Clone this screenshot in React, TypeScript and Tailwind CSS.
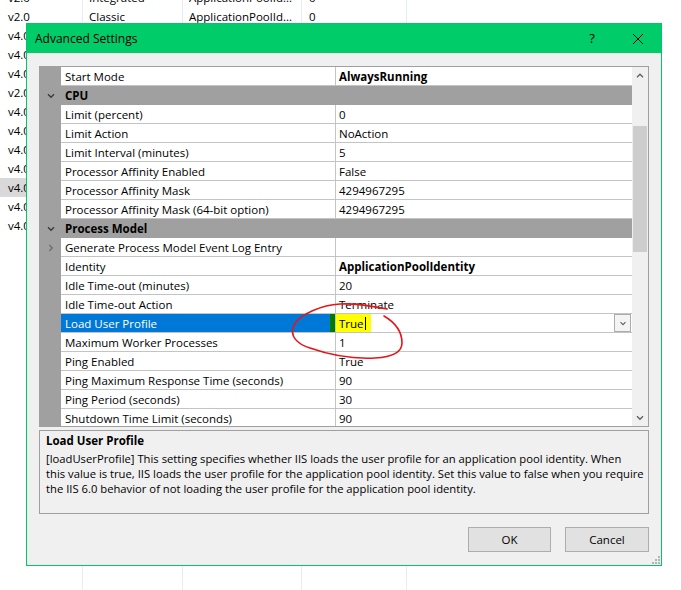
import React from 'react'

type Prop = {
  name?: string
  value?: string
  bold?: boolean
  category?: string
  expand?: boolean
  selected?: boolean
}

const props: Prop[] = [
  { name: 'Start Mode', value: 'AlwaysRunning', bold: true },
  { category: 'CPU' },
  { name: 'Limit (percent)', value: '0' },
  { name: 'Limit Action', value: 'NoAction' },
  { name: 'Limit Interval (minutes)', value: '5' },
  { name: 'Processor Affinity Enabled', value: 'False' },
  { name: 'Processor Affinity Mask', value: '4294967295' },
  { name: 'Processor Affinity Mask (64-bit option)', value: '4294967295' },
  { category: 'Process Model' },
  { name: 'Generate Process Model Event Log Entry', value: '', expand: true },
  { name: 'Identity', value: 'ApplicationPoolIdentity', bold: true },
  { name: 'Idle Time-out (minutes)', value: '20' },
  { name: 'Idle Time-out Action', value: 'Terminate' },
  { name: 'Load User Profile', value: 'True', selected: true },
  { name: 'Maximum Worker Processes', value: '1' },
  { name: 'Ping Enabled', value: 'True' },
  { name: 'Ping Maximum Response Time (seconds)', value: '90' },
  { name: 'Ping Period (seconds)', value: '30' },
  { name: 'Shutdown Time Limit (seconds)', value: '90' },
]

// only the first two rows of the list view peek out above the dialog
const versions = ['v2.0', 'v2.0', 'v4.0', 'v4.0', 'v4.0', 'v2.0', 'v4.0', 'v4.0', 'v4.0', 'v4.0', 'v4.0', 'v4.0', 'v4.0']

const columns = [
  { width: 'w-[83px]', pad: 'pl-[8px]', cells: versions },
  { width: 'w-[100px]', pad: 'pl-[6px]', cells: ['Integrated', 'Classic'] },
  { width: 'w-[119px]', pad: 'pl-[6px]', cells: ['ApplicationPoolId...', 'ApplicationPoolId...'] },
  { width: 'w-[105px]', pad: 'pl-[7px]', cells: ['0', '0'] },
]

function Chevron({ dir, className }: { dir: 'up' | 'down' | 'right'; className?: string }) {
  const d = dir === 'up' ? 'M1 5 L4.5 1.5 L8 5' : dir === 'down' ? 'M1 1.5 L4.5 5 L8 1.5' : 'M1.5 1 L5 4.5 L1.5 8'
  const box = dir === 'right' ? '0 0 7 9' : '0 0 9 7'
  return (
    <svg viewBox={box} className={className} fill="none" stroke="currentColor" strokeWidth="1.6">
      <path d={d} />
    </svg>
  )
}

function PropRow({ p }: { p: Prop }) {
  if (p.category) {
    return (
      <div className="flex h-[19px] shrink-0 items-center bg-[#A0A0A0]">
        <div className="flex w-[21px] justify-center text-[#3A3A3A]">
          <Chevron dir="down" className="h-[6px] w-[8px]" />
        </div>
        <span className="pl-[4px] font-bold">{p.category}</span>
      </div>
    )
  }
  return (
    <div className="flex h-[19px] shrink-0">
      <div className="flex w-[21px] items-center justify-center bg-[#A0A0A0] text-[#6E6E6E]">
        {p.expand && <Chevron dir="right" className="h-[8px] w-[6px]" />}
      </div>
      <div
        className={`flex w-[275px] items-center border-r border-b border-[#C4C4C4] pl-[4px] ${
          p.selected ? 'bg-[#0078D7] text-white' : 'bg-white'
        }`}
      >
        <span className="flex-1 truncate">{p.name}</span>
        {p.selected && <span className="h-full w-[5px] bg-[#007A00]" />}
      </div>
      <div className={`flex w-[296px] items-center border-b border-[#C4C4C4] bg-white ${p.bold ? 'font-bold' : ''}`}>
        {p.selected ? (
          <>
            <span className="flex h-full items-center bg-[#FFFF00] pl-[3px] pr-[5px]">
              True
              <span className="ml-[1px] h-[13px] w-px bg-black" />
            </span>
            <span className="ml-auto mr-[1px] flex h-[18px] w-[17px] items-center justify-center border border-[#ACACAC] bg-[#F4F4F4] text-[#606060]">
              <Chevron dir="down" className="h-[5px] w-[8px]" />
            </span>
          </>
        ) : (
          <span className="pl-[3px]">{p.value}</span>
        )}
      </div>
    </div>
  )
}

export default function App() {
  return (
    <div className="relative h-[590px] w-[681px] overflow-hidden bg-white font-['Open_Sans',sans-serif] text-[11.5px] leading-[19px] text-black">
      {/* list view behind the dialog */}
      <div className="flex h-full">
        {columns.map((col, i) => (
          <div key={i} className={`${col.width} -mt-[12px] shrink-0 border-r border-[#E6ECF4]`}>
            {col.cells.map((c, j) => (
              <div key={j} className={`h-[19px] overflow-hidden whitespace-nowrap ${col.pad} ${j === 10 ? 'bg-[#D9D9D9]' : ''}`}>
                {c}
              </div>
            ))}
          </div>
        ))}
      </div>

      {/* Advanced Settings dialog */}
      <div className="absolute left-[26px] top-[23px] flex h-[543px] w-[636px] flex-col border border-[#00C86A] bg-[#F0F0F0]">
        <div className="flex h-[29px] shrink-0 items-center bg-[#00CC6A]">
          <span className="pl-[8px] text-[12px]">Advanced Settings</span>
          <span className="ml-auto flex w-[46px] justify-center text-[13px]">?</span>
          <span className="flex w-[46px] justify-center">
            <svg viewBox="0 0 10 10" className="h-[10px] w-[10px]" stroke="black" strokeWidth="1">
              <path d="M0 0 L10 10 M10 0 L0 10" />
            </svg>
          </span>
        </div>

        <div className="flex flex-1 flex-col px-[12px] pt-[13px]">
          <div className="flex h-[361px] shrink-0 overflow-hidden border border-[#A0A0A0]">
            <div className="flex flex-1 flex-col overflow-hidden">
              {props.map((p, i) => (
                <PropRow key={i} p={p} />
              ))}
            </div>
            <div className="flex w-[16px] shrink-0 flex-col bg-[#F0F0F0] text-[#606060]">
              <div className="flex h-[17px] items-center justify-center">
                <Chevron dir="up" className="h-[6px] w-[8px]" />
              </div>
              <div className="mt-[42px] h-[126px] w-[14px] self-center bg-[#CDCDCD]" />
              <div className="mt-auto flex h-[17px] items-center justify-center">
                <Chevron dir="down" className="h-[6px] w-[8px]" />
              </div>
            </div>
          </div>

          <div className="mt-[3px] h-[84px] shrink-0 overflow-hidden whitespace-nowrap border border-[#A0A0A0] px-[6px] pt-[2px] text-[11.25px] leading-[15px]">
            <div className="mb-[3px] text-[11.5px] font-bold">Load User Profile</div>
            <div>[loadUserProfile] This setting specifies whether IIS loads the user profile for an application pool identity. When</div>
            <div>this value is true, IIS loads the user profile for the application pool identity. Set this value to false when you require</div>
            <div>the IIS 6.0 behavior of not loading the user profile for the application pool identity.</div>
          </div>

          <div className="mt-[13px] flex justify-end gap-[14px]">
            <button className="h-[25px] w-[83px] border border-[#ADADAD] bg-[#E1E1E1]">OK</button>
            <button className="h-[25px] w-[84px] border border-[#ADADAD] bg-[#E1E1E1]">Cancel</button>
          </div>
        </div>

        <svg viewBox="0 0 8 8" className="absolute bottom-[1px] right-[1px] h-[8px] w-[8px]" fill="#B4B4B4">
          <rect x="6" y="0" width="2" height="2" />
          <rect x="3" y="3" width="2" height="2" />
          <rect x="6" y="3" width="2" height="2" />
          <rect x="0" y="6" width="2" height="2" />
          <rect x="3" y="6" width="2" height="2" />
          <rect x="6" y="6" width="2" height="2" />
        </svg>
      </div>

      {/* red hand-drawn ellipse annotation */}
      <svg className="pointer-events-none absolute left-0 top-0 h-[590px] w-[681px]" viewBox="0 0 681 590" fill="none">
        <path
          d="M387 309 C372 306 355 303 340 304 C322 305 300 314 294 325 C289 336 297 344 310 348 C330 355 355 359 375 358 C392 357 402 352 402 343 C402 333 396 323 384 316"
          stroke="#E8141A"
          strokeWidth="1.6"
          strokeLinecap="round"
        />
      </svg>
    </div>
  )
}
